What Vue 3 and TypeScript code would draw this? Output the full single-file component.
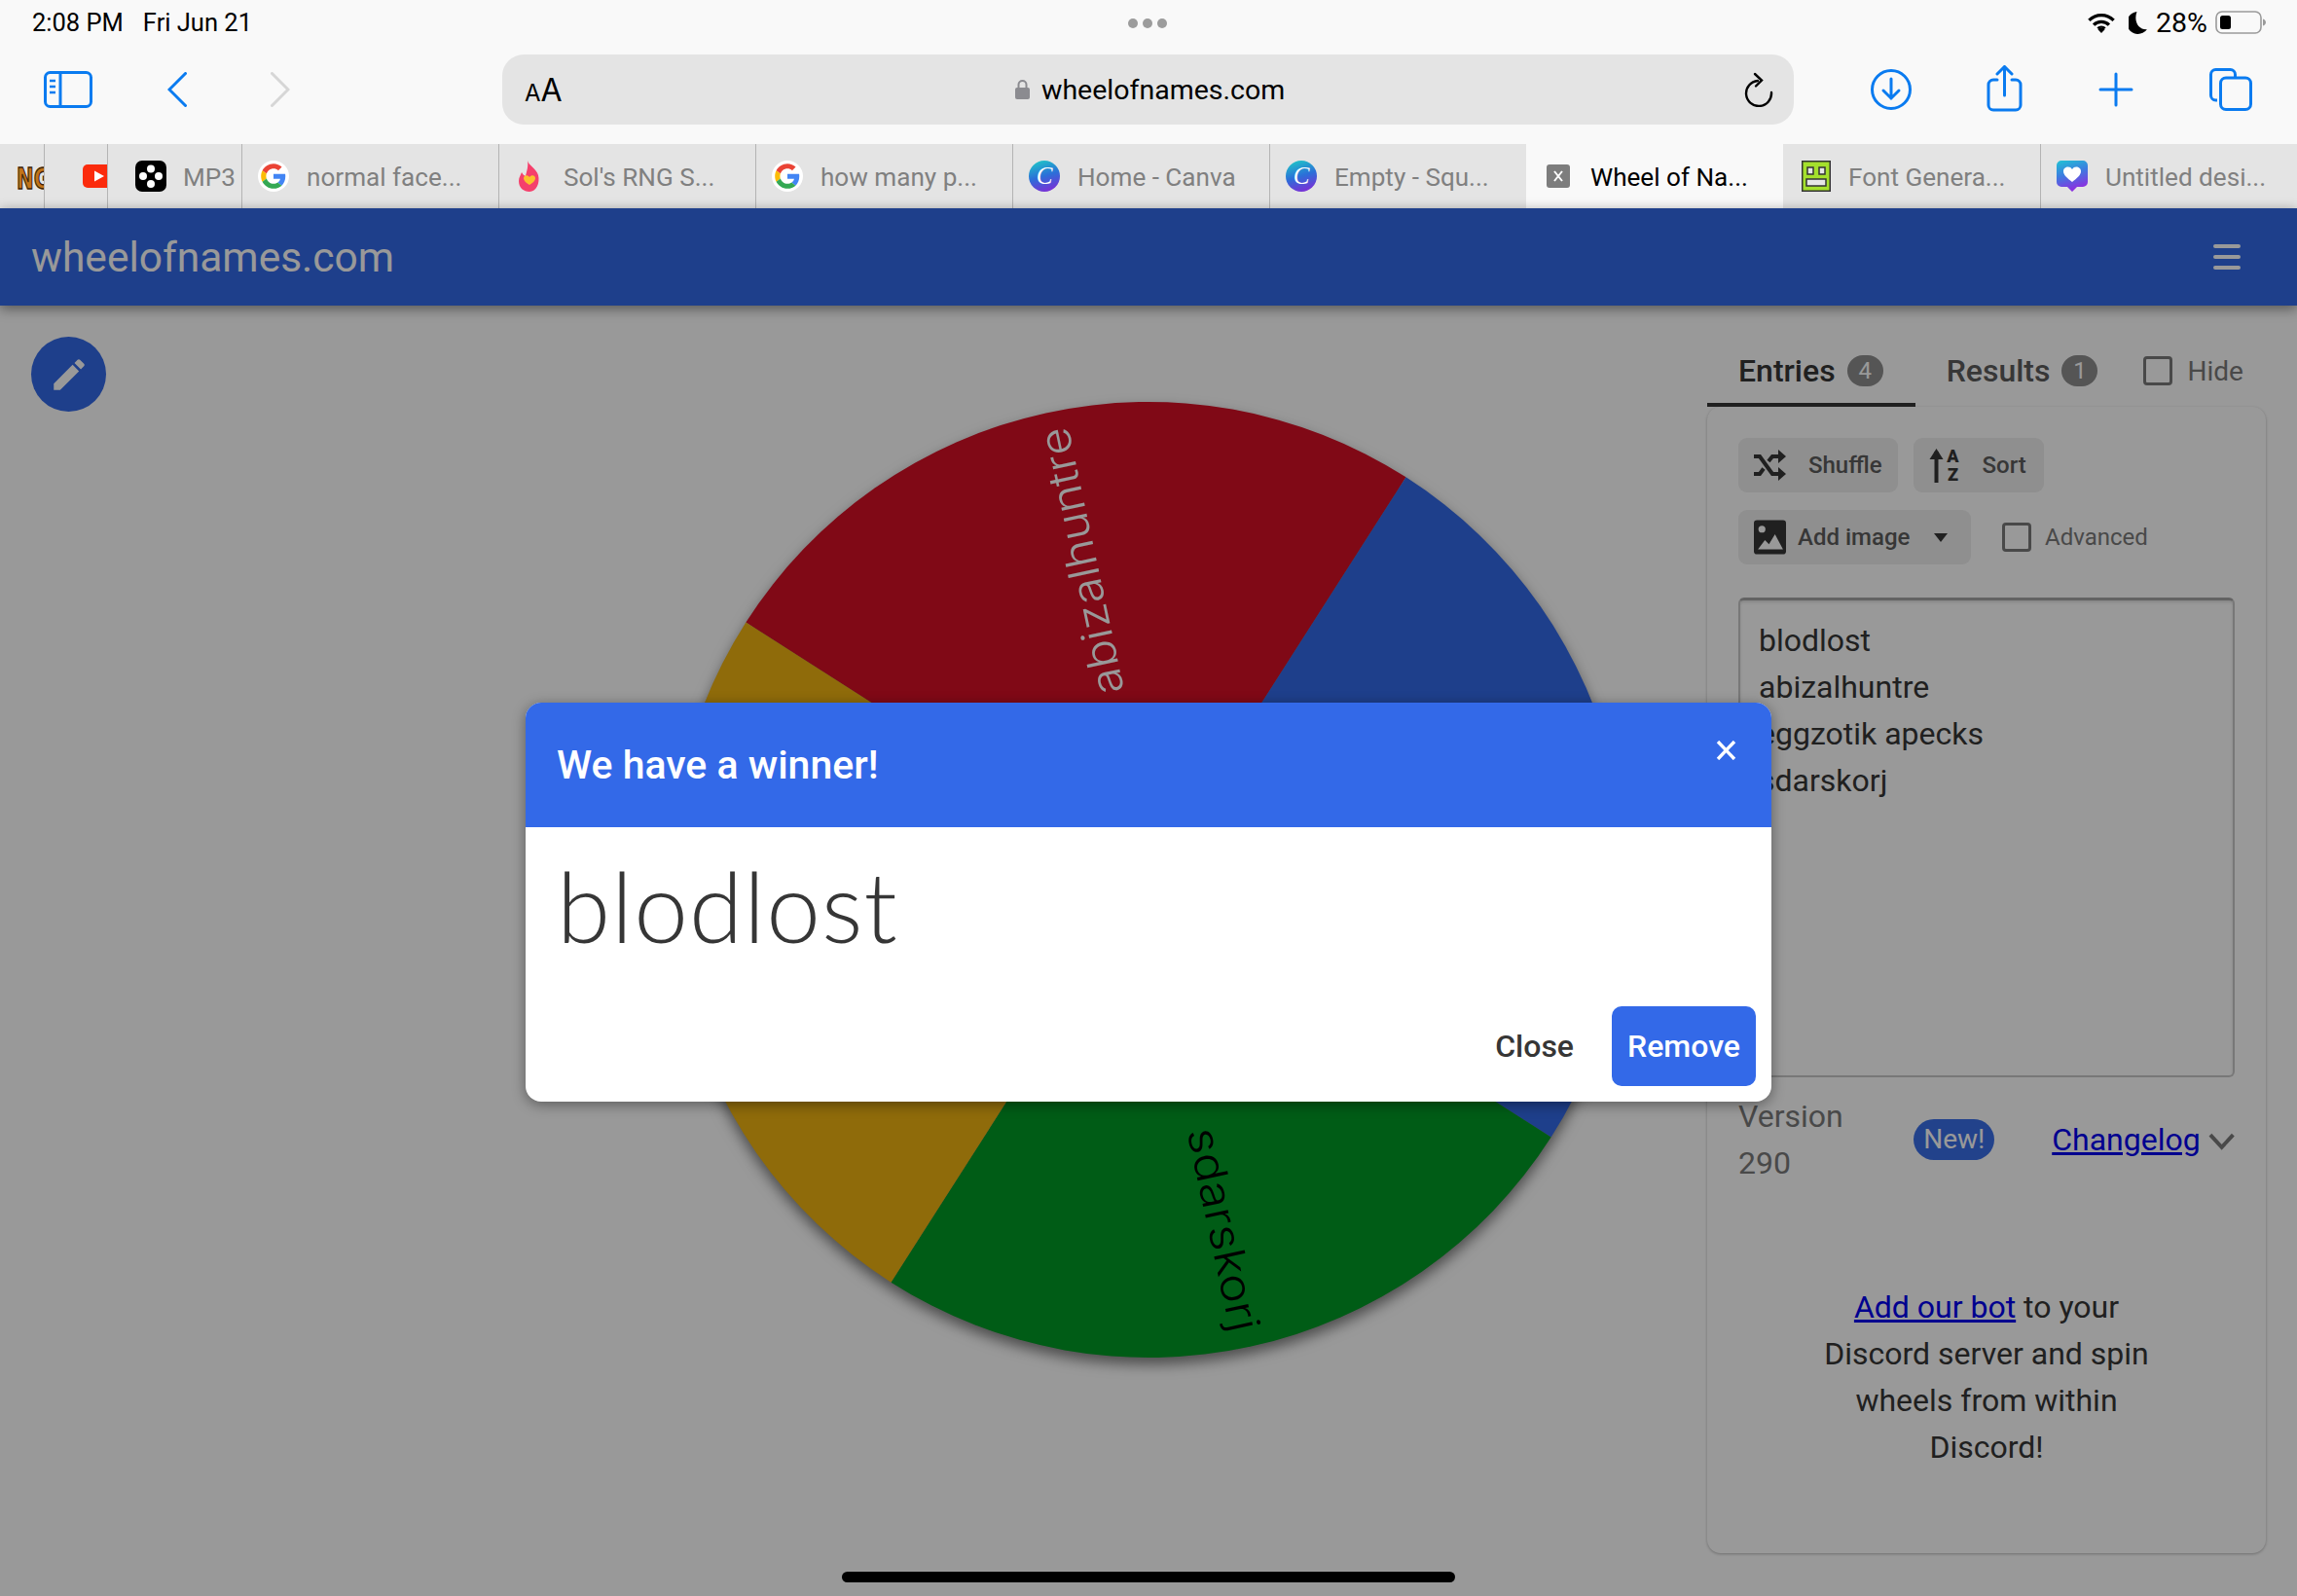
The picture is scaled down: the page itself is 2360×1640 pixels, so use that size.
<template>
  <div class="ipad">
    <div class="status">
      <span class="time">2:08 PM</span>
      <span class="date">Fri Jun 21</span>
      <div class="dots"><i></i><i></i><i></i></div>
      <svg class="wifi" viewBox="0 0 28 20" fill="none" stroke="#000" stroke-width="3.2">
        <path d="M2 7.5a17 17 0 0 1 24 0" />
        <path d="M6.5 12a10.6 10.6 0 0 1 15 0" />
        <path d="M10.5 15.5a5 5 0 0 1 7 0" stroke-width="2.5" />
        <path d="M14 20l-3.4-3.6a5 5 0 0 1 6.8 0z" fill="#000" stroke="none" />
      </svg>
      <svg class="moon" viewBox="0 0 18 22"><path d="M8 0a11 11 0 1 0 10 17.5C10 18 4.5 10 8 0z" /></svg>
      <span class="battery-text">28%</span>
      <svg class="battery" viewBox="0 0 52 24">
        <rect x="1" y="1" width="46" height="22" rx="6" fill="none" stroke="#9a9a9a" stroke-width="1.6" />
        <rect x="5" y="5" width="11" height="14" rx="2.5" fill="#000" />
        <path d="M49 8.5c2 .6 3 2 3 3.5s-1 2.900-3 3.500z" fill="#9a9a9a" />
      </svg>
    </div>

    <div class="toolbar">
      <svg class="ic-sidebar" viewBox="0 0 50 38" fill="none" stroke="#0a7bf0" stroke-width="3">
        <rect x="1.500" y="1.500" width="47" height="35" rx="5" />
        <path d="M17 2v34" />
        <path d="M6 10h6M6 16h6M6 22h6" stroke-width="2.500" />
      </svg>
      <svg class="ic-back" viewBox="0 0 20 36" fill="none" stroke="#0a7bf0" stroke-width="3" stroke-linecap="round">
        <path d="M18.500 1.500L2 18l16.500 16.500" />
      </svg>
      <svg class="ic-fwd" viewBox="0 0 20 36" fill="none" stroke="#d6d6d6" stroke-width="3" stroke-linecap="round">
        <path d="M1.500 1.500L18 18 1.500 34.500" />
      </svg>
      <div class="urlbar">
        <span class="aa"><small>A</small>A</span>
        <div class="url-mid">
          <svg class="lock" viewBox="0 0 15 20">
            <path d="M3.500 9V5a4 4 0 0 1 8 0v4" fill="none" stroke="#8b8b90" stroke-width="2" />
            <rect y="8" width="15" height="12" rx="2" fill="#8b8b90" />
          </svg>
          <span>wheelofnames.com</span>
        </div>
        <svg class="reload" viewBox="0 0 32 36" fill="none" stroke="#000" stroke-width="2.400" stroke-linecap="round">
          <path d="M15 9A13 13 0 1 0 29 21" />
          <path d="M12 2l7 6.500-6 6" />
        </svg>
      </div>
      <svg class="ic-dl" viewBox="0 0 42 42" fill="none" stroke="#0a7bf0" stroke-width="3" stroke-linecap="round">
        <circle cx="21" cy="21" r="19.500" />
        <path d="M21 10v20M13 22l8 8 8-8" />
      </svg>
      <svg class="ic-share" viewBox="0 0 37 48" fill="none" stroke="#0a7bf0" stroke-width="3" stroke-linecap="round">
        <path d="M11 15H7a5 5 0 0 0-5 5v21a5 5 0 0 0 5 5h23a5 5 0 0 0 5-5V20a5 5 0 0 0-5-5h-4" />
        <path d="M18.500 2v29M11 9l7.500-7.500L26 9" />
      </svg>
      <svg class="ic-plus" viewBox="0 0 36 36" stroke="#0a7bf0" stroke-width="3" stroke-linecap="round">
        <path d="M18 2v32M2 18h32" />
      </svg>
      <svg class="ic-tabs" viewBox="0 0 44 44" fill="none" stroke="#0a7bf0" stroke-width="3">
        <path d="M8 33H6.500a5 5 0 0 1-5-5V6.500a5 5 0 0 1 5-5h15a5 5 0 0 1 5 5V9" />
        <rect x="11.500" y="10" width="31" height="32.500" rx="5.500" />
      </svg>
    </div>

    <div class="tabs">
      <div v-for="t in tabs" :key="t.kind + t.title" class="tab" :class="[t.size, { active: t.active }]">
        <svg v-if="t.kind === 'ng'" class="fav" viewBox="0 0 32 32">
          <text x="0" y="29" class="ng-txt" textLength="35" lengthAdjust="spacingAndGlyphs">NG</text>
        </svg>
        <svg v-else-if="t.kind === 'yt'" class="fav yt" viewBox="0 0 32 24">
          <rect width="32" height="24" rx="5" fill="#fb2b0c" />
          <path d="M12 6.500l10 5.500-10 5.500z" fill="#fff" />
        </svg>
        <svg v-else-if="t.kind === 'dots'" class="fav" viewBox="0 0 32 32">
          <rect width="32" height="32" rx="7" fill="#000" />
          <circle cx="16" cy="8.500" r="4" fill="#fff" />
          <circle cx="8" cy="16" r="4" fill="#fff" />
          <circle cx="24" cy="16" r="4" fill="#fff" />
          <circle cx="16" cy="24" r="4" fill="#fff" />
        </svg>
        <svg v-else-if="t.kind === 'g'" class="fav" viewBox="-6 -6 60 60">
          <circle cx="24" cy="24" r="30" fill="#fff" />
          <path fill="#ea4335" d="M24 9.500c3.540 0 6.710 1.220 9.210 3.600l6.850-6.850C35.900 2.380 30.470 0 24 0 14.620 0 6.510 5.380 2.560 13.220l7.980 6.190C12.430 13.720 17.740 9.500 24 9.500z" />
          <path fill="#4285f4" d="M46.980 24.550c0-1.570-.15-3.090-.38-4.550H24v9.020h12.940c-.58 2.960-2.260 5.480-4.780 7.180l7.730 6c4.510-4.180 7.090-10.360 7.090-17.650z" />
          <path fill="#fbbc05" d="M10.530 28.590c-.48-1.450-.76-2.990-.76-4.590s.27-3.140.76-4.590l-7.980-6.190C.92 16.460 0 20.120 0 24c0 3.880.92 7.540 2.560 10.780l7.970-6.190z" />
          <path fill="#34a853" d="M24 48c6.480 0 11.930-2.130 15.890-5.810l-7.730-6c-2.150 1.450-4.920 2.300-8.160 2.300-6.260 0-11.570-4.220-13.470-9.910l-7.980 6.190C6.510 42.620 14.620 48 24 48z" />
        </svg>
        <svg v-else-if="t.kind === 'flame'" class="fav" viewBox="0 0 32 32">
          <path d="M13 0c1 5 9 8 11 15 2 8-2 17-9 17-6 0-11-4-11-11 0-4 2-6 3-9 1 2 2 3 4 4 1-5 3-9 2-16z" fill="#f5406c" />
          <path d="M15 25c-3-2-6-4-6-7 0-3 4-4 6-1 2-3 6-2 6 1 0 3-3 5-6 7z" fill="#fbc02d" />
        </svg>
        <svg v-else-if="t.kind === 'canva'" class="fav" viewBox="0 0 32 32">
          <defs>
            <linearGradient id="canvaGrad" x1="0.300" y1="0" x2="0.600" y2="1">
              <stop offset="0" stop-color="#1fc3c8" />
              <stop offset="0.500" stop-color="#2b6fd8" />
              <stop offset="1" stop-color="#7a2fd6" />
            </linearGradient>
          </defs>
          <circle cx="16" cy="16" r="16" fill="url(#canvaGrad)" />
          <text x="16" y="24" class="canva-txt">C</text>
        </svg>
        <svg v-else-if="t.kind === 'x'" class="fav close-fav" viewBox="0 0 24 32">
          <rect y="4" width="24" height="24" rx="3" fill="#7d7d7d" />
          <path d="M8 11l8 10M16 11l-8 10" stroke="#fff" stroke-width="2" />
        </svg>
        <svg v-else-if="t.kind === 'font'" class="fav font-fav" viewBox="0 0 30 32">
          <rect width="30" height="32" fill="#333" />
          <rect x="1.500" y="1.500" width="27" height="29" fill="#a4e02c" />
          <rect x="6" y="7" width="6" height="7" fill="#e6e6e6" stroke="#333" stroke-width="1.500" />
          <rect x="18" y="7" width="6" height="7" fill="#e6e6e6" stroke="#333" stroke-width="1.500" />
          <rect x="5" y="19" width="20" height="7" fill="#e6e6e6" stroke="#333" stroke-width="1.500" />
        </svg>
        <svg v-else-if="t.kind === 'heart'" class="fav" viewBox="0 0 32 32">
          <defs>
            <linearGradient id="heartGrad" x1="0" y1="0" x2="0.300" y2="1">
              <stop offset="0" stop-color="#20c4d4" />
              <stop offset="0.500" stop-color="#3d7be0" />
              <stop offset="1" stop-color="#8a32e0" />
            </linearGradient>
          </defs>
          <path d="M5 0h22a5 5 0 0 1 5 5v17a5 5 0 0 1-5 5h-6l-5 5-5-5H5a5 5 0 0 1-5-5V5a5 5 0 0 1 5-5z" fill="url(#heartGrad)" />
          <path d="M16 22c-5-4-9-7-9-11 0-5 7-6 9-2 2-4 9-3 9 2 0 4-4 7-9 11z" fill="#fff" />
        </svg>
        <span v-if="t.title" class="tab-title">{{ t.title }}</span>
      </div>
    </div>

    <div class="page">
      <header class="navbar">
        <span class="brand">wheelofnames.com</span>
        <div class="burger"><i></i><i></i><i></i></div>
      </header>

      <main class="content">
        <div class="wheel-col">
          <button class="fab">
            <svg viewBox="0 0 24 24" fill="#fff"><path d="M3 17.250V21h3.750L17.810 9.940l-3.750-3.750L3 17.250zM20.710 7.040c.39-.39.39-1.020 0-1.410l-2.340-2.340c-.39-.39-1.020-.39-1.410 0l-1.830 1.830 3.750 3.750 1.830-1.830z" /></svg>
          </button>
          <svg class="wheel" viewBox="-491 -491 982 982">
            <path v-for="w in wedges" :key="w.color" :d="w.d" :fill="w.color" />
            <text
              v-for="l in labels"
              :key="l.text"
              class="wheel-label"
              :fill="l.fill"
              :transform="`rotate(${l.rot})`"
              x="474"
              y="0"
              :textLength="l.len"
              lengthAdjust="spacingAndGlyphs"
            >{{ l.text }}</text>
          </svg>
        </div>

        <aside class="side">
          <div class="side-tabs">
            <div class="stab on">Entries <span class="badge">4</span></div>
            <div class="stab">Results <span class="badge">1</span></div>
            <label class="hide"><span class="check"></span>Hide</label>
          </div>
          <div class="card">
            <div class="btn-row">
              <button class="btn shuffle">
                <svg viewBox="0 0 33 36">
                  <g fill="none" stroke="#363636" stroke-width="4">
                    <path d="M0 9h6l13 18h7" />
                    <path d="M0 27h6l4-5.500M15 14l4-5h7" />
                  </g>
                  <path d="M25 2l8 7-8 7zM25 20l8 7-8 7z" fill="#363636" />
                </svg>
                Shuffle
              </button>
              <button class="btn sort">
                <svg viewBox="0 0 32 36">
                  <path d="M7 4v32" stroke="#363636" stroke-width="4" fill="none" />
                  <path d="M0 12L7 1l7 11z" fill="#363636" />
                  <text x="24" y="15" class="az">A</text>
                  <text x="24" y="34" class="az">Z</text>
                </svg>
                Sort
              </button>
            </div>
            <div class="btn-row second">
              <button class="btn add-image">
                <svg viewBox="0 0 32 34">
                  <rect width="32" height="34" rx="3" fill="#363636" />
                  <circle cx="8" cy="9" r="3.500" fill="#fff" />
                  <path d="M4 29l7-9 4 4 6-10 8 15z" fill="#fff" />
                </svg>
                <span>Add image</span>
                <svg class="caret" viewBox="0 0 14 9"><path d="M0 0h14L7 9z" fill="#363636" /></svg>
              </button>
              <label class="advanced"><span class="check"></span>Advanced</label>
            </div>
            <div class="entries">
              <div v-for="e in entries" :key="e">{{ e }}</div>
            </div>
            <div class="version-row">
              <div class="version">Version<br />290</div>
              <span class="pill">New!</span>
              <a class="changelog" href="#">Changelog</a>
              <svg class="chev" viewBox="0 0 28 18" fill="none" stroke="#7a7a7a" stroke-width="4"><path d="M2 2l12 13L26 2" /></svg>
            </div>
            <p class="discord"><a href="#">Add our bot</a> to your Discord server and spin wheels from within Discord!</p>
          </div>
        </aside>
      </main>

      <div class="overlay">
        <div class="dialog">
          <div class="dlg-head">
            <span class="dlg-title">We have a winner!</span>
            <svg class="dlg-x" viewBox="0 0 21 20" stroke="#fff" stroke-width="3.400"><path d="M2 1l17 18M19 1L2 19" /></svg>
          </div>
          <div class="dlg-body">blodlost</div>
          <div class="dlg-foot">
            <button class="dlg-close">Close</button>
            <button class="dlg-remove">Remove</button>
          </div>
        </div>
      </div>

      <div class="home-bar"></div>
    </div>
  </div>
</template>

<script setup lang="ts">
interface Tab {
  kind: string;
  title: string;
  size?: string;
  active?: boolean;
}

const tabs: Tab[] = [
  { kind: 'ng', title: '', size: 'stub-ng' },
  { kind: 'yt', title: '', size: 'stub-yt' },
  { kind: 'dots', title: 'MP3', size: 'stub-mp3' },
  { kind: 'g', title: 'normal face...' },
  { kind: 'flame', title: "Sol's RNG S..." },
  { kind: 'g', title: 'how many p...' },
  { kind: 'canva', title: 'Home - Canva' },
  { kind: 'canva', title: 'Empty - Squ...' },
  { kind: 'x', title: 'Wheel of Na...', active: true },
  { kind: 'font', title: 'Font Genera...' },
  { kind: 'heart', title: 'Untitled desi...' }
];

const entries = ['blodlost', 'abizalhuntre', 'eggzotik apecks', 'sdarskorj'];

const R = 491;
const START = -57.4;

const point = (deg: number) => {
  const a = ((deg - 90) * Math.PI) / 180;
  return `${(R * Math.cos(a)).toFixed(2)} ${(R * Math.sin(a)).toFixed(2)}`;
};

// four equal slices, clockwise from the red one
const wedges = ['#d50f25', '#3369e8', '#009925', '#eeb211'].map((color, i) => {
  const from = START + i * 90;
  return { color, d: `M0 0L${point(from)}A${R} ${R} 0 0 1 ${point(from + 90)}Z` };
});

// the other two names sit fully behind the dialog
const labels = [
  { text: 'abizalhuntre', rot: -102, len: 279, fill: '#fff' },
  { text: 'sdarskorj', rot: 77.8, len: 213, fill: '#000' }
];
</script>

<style scoped>
.ipad {
  width: 2360px;
  height: 1640px;
  overflow: hidden;
  display: flex;
  flex-direction: column;
  background: #f9f9f9;
  font-family: Roboto, "Liberation Sans", sans-serif;
}

.status {
  height: 46px;
  display: flex;
  align-items: center;
  font-size: 25.500px;
  color: #000;
  padding-left: 33px;
  box-sizing: border-box;
  position: relative;
}
.date {
  margin-left: 20px;
}
.dots {
  position: absolute;
  left: 1159px;
  top: 19px;
  display: flex;
  gap: 5px;
}
.dots i {
  width: 10px;
  height: 10px;
  border-radius: 50%;
  background: #9c9c9c;
}
.wifi {
  width: 30px;
  height: 21px;
  margin-left: auto;
}
.moon {
  width: 19px;
  height: 23px;
  margin-left: 13px;
}
.battery-text {
  margin-left: 9px;
  font-size: 28.500px;
}
.battery {
  width: 52px;
  height: 24px;
  margin-left: 8px;
  margin-right: 32px;
}

.toolbar {
  display: flex;
  align-items: center;
  padding: 10px 0 20px 45px;
}
.ic-sidebar { width: 50px; height: 38px; }
.ic-back { width: 20px; height: 36px; margin-left: 77px; }
.ic-fwd { width: 20px; height: 36px; margin-left: 86px; }
.urlbar {
  margin-left: 218px;
  width: 1327px;
  height: 72px;
  border-radius: 22px;
  background: #e4e4e4;
  display: flex;
  align-items: center;
  position: relative;
  padding: 0 20px 0 23px;
  box-sizing: border-box;
}
.aa {
  font-family: Inter, Roboto, sans-serif;
  font-size: 32px;
  color: #000;
}
.aa small {
  font-size: 24px;
}
.url-mid {
  position: absolute;
  left: 527px;
  display: flex;
  align-items: center;
  gap: 12px;
  font-size: 28.500px;
  color: #000;
}
.lock { width: 15px; height: 20px; }
.reload { width: 32px; height: 36px; margin-left: auto; }
.ic-dl { width: 42px; height: 42px; margin-left: 79px; }
.ic-share { width: 37px; height: 48px; margin-left: 77px; margin-top: -2px; }
.ic-plus { width: 36px; height: 36px; margin-left: 78px; }
.ic-tabs { width: 44px; height: 44px; margin-left: 78px; }

.tabs {
  display: flex;
  height: 66px;
  background: #e4e4e4;
}
.tab {
  width: 264px;
  flex: none;
  box-sizing: border-box;
  border-left: 1px solid #b4b4b4;
  display: flex;
  align-items: center;
  padding-left: 16px;
  overflow: hidden;
  white-space: nowrap;
  font-size: 26.100px;
  color: #808080;
}
.tab.active {
  background: #f9f9f9;
  color: #000;
  border-left: none;
  padding-left: 21px;
}
.tab.active + .tab {
  border-left: none;
  padding-left: 19px;
}
.tab.stub-ng {
  width: 45px;
  border-left: none;
  padding-left: 17px;
}
.tab.stub-yt {
  width: 65px;
  padding-left: 39px;
}
.tab.stub-mp3 {
  width: 138px;
  padding-left: 28px;
}
.tab.stub-mp3 .tab-title {
  margin-left: 17px;
}
.fav {
  width: 32px;
  height: 32px;
  flex: none;
  overflow: visible;
}
.fav.yt {
  width: 32px;
  height: 24px;
}
.fav.close-fav {
  width: 24px;
}
.fav.font-fav {
  width: 30px;
}
.tab-title {
  margin-left: 18px;
  padding-top: 1px;
}
.tab.active .tab-title {
  margin-left: 21px;
}
.ng-txt {
  font-family: "DejaVu Sans", sans-serif;
  font-weight: 700;
  font-size: 31px;
  fill: #c2741a;
  stroke: #3f2408;
  stroke-width: 1.500px;
}
.canva-txt {
  font-family: "Liberation Serif", serif;
  font-style: italic;
  font-size: 25px;
  fill: #fff;
  text-anchor: middle;
}

.page {
  flex: 1;
  position: relative;
  background: #fff;
  color: #363636;
}
.navbar {
  height: 100px;
  background: #3369e8;
  box-shadow: 0 3px 12px rgba(0, 0, 0, 0.45);
  display: flex;
  align-items: center;
  padding: 0 58px 0 32px;
  position: relative;
}
.brand {
  font-size: 42.500px;
  color: #fff;
}
.burger {
  margin-left: auto;
  display: flex;
  flex-direction: column;
  gap: 7px;
}
.burger i {
  width: 28px;
  height: 4px;
  border-radius: 2px;
  background: #fff;
}

.content {
  display: flex;
  height: 1326px;
}
.wheel-col {
  width: 1754px;
  flex: none;
  display: flex;
  justify-content: flex-end;
  padding: 99px 83px 0 32px;
  box-sizing: border-box;
  position: relative;
}
.fab {
  position: absolute;
  left: 32px;
  top: 32px;
  width: 77px;
  height: 77px;
  border: none;
  border-radius: 50%;
  background: #3369e8;
  display: flex;
  align-items: center;
  justify-content: center;
  padding: 0;
}
.fab svg {
  width: 42px;
  height: 42px;
}
.wheel {
  width: 982px;
  height: 982px;
  overflow: visible;
  filter: drop-shadow(0 7px 7px rgba(0, 0, 0, 0.5));
}
.wheel-label {
  font-family: Inter, "Open Sans", sans-serif;
  font-weight: 300;
  font-size: 44px;
  text-anchor: end;
  dominant-baseline: central;
}

.side {
  width: 574px;
  flex: none;
  margin-top: 26px;
}
.side-tabs {
  display: flex;
  align-items: stretch;
  height: 78px;
}
.stab {
  padding: 10px 33px 2px 32px;
  display: flex;
  align-items: center;
  gap: 12px;
  font-size: 32px;
  font-weight: 500;
  color: #5c5c5c;
  border-bottom: 4px solid transparent;
}
.stab + .stab {
  padding-left: 32px;
  padding-right: 0;
}
.stab.on {
  color: #363636;
  border-bottom-color: #363636;
}
.badge {
  width: 37px;
  height: 32px;
  border-radius: 16px;
  background: #8e8e8e;
  color: #fff;
  font-size: 24px;
  font-weight: 400;
  display: flex;
  align-items: center;
  justify-content: center;
}
.check {
  width: 30px;
  height: 30px;
  box-sizing: border-box;
  border: 3px solid #7a7a7a;
  border-radius: 4px;
  flex: none;
}
.hide {
  display: flex;
  align-items: center;
  gap: 15px;
  margin-left: 47px;
  padding-top: 4px;
  font-size: 28px;
  color: #7a7a7a;
}
.card {
  box-sizing: border-box;
  height: 1178px;
  padding: 32px;
  border-radius: 14px;
  background: #fff;
  box-shadow: 0 1px 3px rgba(0, 0, 0, 0.28);
}
.btn-row {
  display: flex;
  gap: 16px;
}
.btn-row.second {
  margin-top: 18px;
  gap: 32px;
}
.btn {
  height: 56px;
  border: none;
  border-radius: 9px;
  background: #eeeeee;
  display: flex;
  align-items: center;
  font-family: inherit;
  font-size: 24px;
  font-weight: 500;
  color: #5c5c5c;
  padding: 0 16px;
}
.btn svg {
  width: 33px;
  height: 36px;
  flex: none;
}
.shuffle svg { margin-right: 23px; }
.sort svg { margin-right: 22px; }
.btn.sort { padding-right: 18px; }
.btn.add-image svg { margin-right: 12px; }
.btn.add-image {
  width: 239px;
  box-sizing: border-box;
}
.btn.add-image .caret {
  width: 14px;
  height: 9px;
  margin: 0 0 0 25px;
}
.az {
  font-family: Roboto, sans-serif;
  font-weight: 900;
  font-size: 18px;
  fill: #363636;
  text-anchor: middle;
}
.advanced {
  display: flex;
  align-items: center;
  gap: 14px;
  font-size: 24px;
  color: #7a7a7a;
}
.entries {
  margin-top: 34px;
  height: 493px;
  box-sizing: border-box;
  border: 2px solid #c9c9c9;
  border-top: 3px solid #a5a5a5;
  border-radius: 6px;
  box-shadow: inset 0 2px 3px rgba(0, 0, 0, 0.12);
  padding: 17px 19px;
  font-size: 32px;
  line-height: 48px;
  color: #363636;
}
.version-row {
  display: flex;
  align-items: center;
  margin-top: 16px;
  font-size: 32px;
  line-height: 48px;
}
.version {
  width: 185px;
  color: #7a7a7a;
}
.pill {
  width: 85px;
  height: 42px;
  border-radius: 21px;
  background: #3a6fe8;
  color: #fff;
  font-size: 28px;
  line-height: 42px;
  text-align: center;
}
.changelog {
  margin-left: 59px;
  color: #0000ee;
}
.chev {
  width: 28px;
  height: 18px;
  margin-left: 8px;
  margin-top: 4px;
}
.discord {
  margin: 100px auto 0;
  width: 370px;
  text-align: center;
  font-size: 32px;
  line-height: 48px;
  color: #363636;
}
.discord a {
  color: #0000ee;
}

.overlay {
  position: absolute;
  inset: 0;
  background: rgba(0, 0, 0, 0.4);
  display: flex;
  align-items: center;
  justify-content: center;
}
.dialog {
  width: 1280px;
  height: 410px;
  border-radius: 16px;
  background: #fff;
  overflow: hidden;
  display: flex;
  flex-direction: column;
  box-shadow: 0 3px 14px rgba(0, 0, 0, 0.4);
}
.dlg-head {
  height: 128px;
  flex: none;
  background: #3369e8;
  display: flex;
  align-items: center;
  justify-content: space-between;
  padding: 0 36px 0 32px;
}
.dlg-title {
  color: #fff;
  font-size: 41px;
  font-weight: 500;
}
.dlg-x {
  width: 21px;
  height: 20px;
  align-self: flex-start;
  margin-top: 39px;
}
.dlg-body {
  flex: 1;
  padding: 24px 0 0 32px;
  font-family: Lato, "Open Sans", sans-serif;
  font-weight: 300;
  font-size: 100px;
  line-height: 112px;
  letter-spacing: 1px;
  color: #363636;
}
.dlg-foot {
  display: flex;
  align-items: center;
  justify-content: flex-end;
  gap: 39px;
  padding: 0 16px 16px 0;
}
.dlg-close,
.dlg-remove {
  border: none;
  background: none;
  padding: 0;
  font-family: inherit;
  font-size: 32px;
  font-weight: 500;
  color: #363636;
}
.dlg-remove {
  width: 148px;
  height: 82px;
  border-radius: 10px;
  background: #3369e8;
  color: #fff;
}

.home-bar {
  position: absolute;
  left: 865px;
  bottom: 14px;
  width: 630px;
  height: 11px;
  border-radius: 6px;
  background: #000;
}
</style>
